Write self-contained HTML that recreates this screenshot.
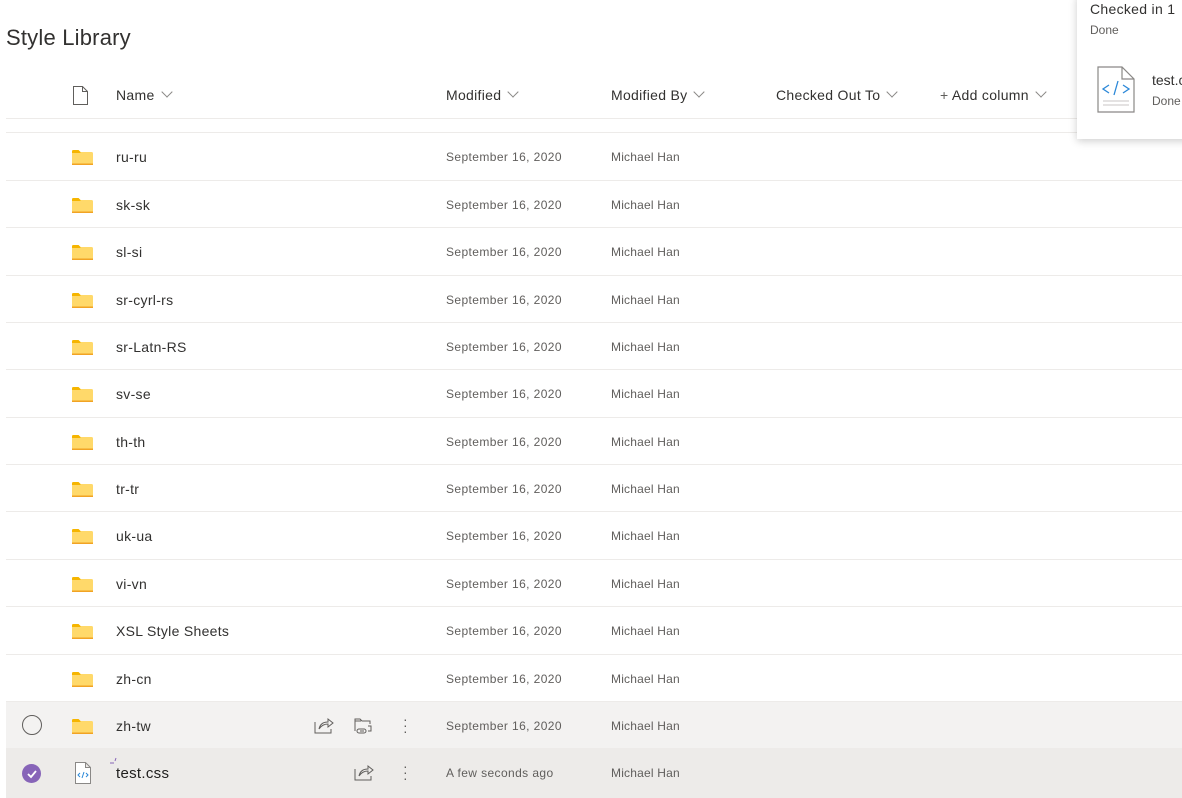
<!DOCTYPE html><html><head><style>
body{margin:0;width:1182px;height:797px;overflow:hidden;background:#fff;font-family:"Liberation Sans",sans-serif;color:#323130;position:relative}
.a{position:absolute}
.h{font-size:14px;top:87px;color:#323130;letter-spacing:.3px}
.chev{display:inline-block;width:7px;height:7px;border-right:1px solid #8a8886;border-bottom:1px solid #8a8886;transform:rotate(45deg);margin-left:8px;position:relative;top:-4px}
.row{position:absolute;left:6px;width:1176px;height:47px;border-top:1px solid #edebe9}
.nm{position:absolute;left:110px;top:16px;font-size:14px;letter-spacing:.3px}
.dt{position:absolute;left:440px;top:17px;font-size:12px;color:#605e5c;letter-spacing:.4px}
.by{position:absolute;left:605px;top:17px;font-size:12px;color:#605e5c;letter-spacing:.2px}
.fd{position:absolute;left:66px;top:17px;width:21px;height:15px}
</style></head><body>
<div class="a" style="left:6px;top:25px;font-size:22px;color:#323130;letter-spacing:.2px">Style Library</div>
<svg class="a" style="left:72px;top:86px" width="17" height="19"><path d="M1.5 .5h9l5 5v13h-14z M10.5 .5v5h5" fill="none" stroke="#605e5c"/></svg>
<div class="a h" style="left:116px">Name<span class="chev"></span></div>
<div class="a h" style="left:446px">Modified<span class="chev"></span></div>
<div class="a h" style="left:611px">Modified By<span class="chev"></span></div>
<div class="a h" style="left:776px">Checked Out To<span class="chev"></span></div>
<div class="a h" style="left:940px"><span style="color:#605e5c">+</span> Add column<span class="chev"></span></div>
<div class="a" style="left:6px;top:118px;width:1176px;border-top:1px solid #edebe9"></div>
<div id="rows"></div>
<script>
var n=["ru-ru","sk-sk","sl-si","sr-cyrl-rs","sr-Latn-RS","sv-se","th-th","tr-tr","uk-ua","vi-vn","XSL Style Sheets","zh-cn","zh-tw"];
var tops=[132,180,227,275,322,369,417,464,511,559,606,654,701];
var fold='<svg class="fd" viewBox="0 0 21 15"><path d="M0 1.5a1.5 1.5 0 0 1 1.5-1.5h5l2 2h11a1.5 1.5 0 0 1 1.5 1.5v10a1.5 1.5 0 0 1-1.5 1.5h-18a1.5 1.5 0 0 1-1.5-1.5z" fill="#ffd96a"/><path d="M0 1.5a1.5 1.5 0 0 1 1.5-1.5h5l2 2v1h-8.5z" fill="#f6b500"/><rect x="0" y="13.5" width="21" height="1.5" fill="#f1a324"/></svg>';
var h='';
for(var i=0;i<13;i++){
var bg=i==12?'background:#f3f2f1;':'';
h+='<div class="row" style="top:'+tops[i]+'px;'+bg+'">'+fold+'<div class="nm">'+n[i]+'</div><div class="dt">September 16, 2020</div><div class="by">Michael Han</div>';
if(i==12){h+='<div class="a" style="left:16px;top:13px;width:18px;height:18px;border:1px solid #605e5c;border-radius:50%"></div>'+
'<svg class="a" style="left:308px;top:14px" width="20" height="18"><path d="M1 6v11h16v-4 M5 13c1-5 4-7 9-7v-3l5 4-5 4v-3c-4 0-7 2-9 5z" fill="none" stroke="#605e5c"/></svg>'+
'<svg class="a" style="left:348px;top:14px" width="20" height="20"><path d="M1 15V3h5l2 2h8v3 M1 5h6 M14 10h3v5h-3 M10 17H5a2 2 0 0 1 0-4h5a2 2 0 0 1 0 4 M6 15h4" fill="none" stroke="#605e5c"/></svg>'+
'<div class="a" style="left:397px;top:14px;width:3px;color:#605e5c;font-size:14px;line-height:6px">·<br>·<br>·</div>';}
h+='</div>';}
h+='<div class="row" style="top:748px;height:49px;background:#edebe9">'+
'<div class="a" style="left:16px;top:15px;width:19px;height:19px;background:#8764b8;border-radius:50%"></div><svg class="a" style="left:20px;top:20px" width="12" height="10"><path d="M2 5l3 3 5-6" fill="none" stroke="#fff" stroke-width="1.8"/></svg>'+
'<svg class="a" style="left:68px;top:13px" width="18" height="22"><path d="M1.5 .5h10l5 5v16h-15z M11.5 .5v5h5" fill="#fff" stroke="#8a8886"/><path d="M6 11l-2 2 2 2 M12 11l2 2-2 2 M10 10l-2 6" fill="none" stroke="#2b88d8"/></svg>'+
'<svg class="a" style="left:103px;top:8px" width="10" height="8"><path d="M1 6h4 M6 4l1-3" stroke="#8764b8"/></svg>'+
'<div class="nm" style="top:16px;color:#201f1e;font-size:15px">test.css</div>'+
'<svg class="a" style="left:348px;top:14px" width="20" height="18"><path d="M1 6v11h16v-4 M5 13c1-5 4-7 9-7v-3l5 4-5 4v-3c-4 0-7 2-9 5z" fill="none" stroke="#605e5c"/></svg>'+
'<div class="a" style="left:397px;top:14px;width:3px;color:#605e5c;font-size:14px;line-height:6px">·<br>·<br>·</div>'+
'<div class="dt">A few seconds ago</div><div class="by">Michael Han</div></div>';
document.getElementById('rows').innerHTML=h;
</script>
<div class="a" style="left:1077px;top:-5px;width:120px;height:144px;background:#fff;box-shadow:0 2px 8px rgba(0,0,0,.2)">
<div class="a" style="left:13px;top:6px;font-size:14px;white-space:nowrap;letter-spacing:.3px">Checked in 1</div>
<div class="a" style="left:13px;top:28px;font-size:12px;color:#605e5c">Done</div>
<svg class="a" style="left:20px;top:71px" width="40" height="48"><path d="M1 1h24l12 12v33H1z M25 1v12h12" fill="#fff" stroke="#8a8886" stroke-width="1.2"/><path d="M12 19l-6 4 6 4 M26 19l6 4-6 4 M21 15l-4 14" fill="none" stroke="#2b88d8" stroke-width="1.3"/><path d="M6 35h26M6 39h26" stroke="#c8c6c4"/></svg>
<div class="a" style="left:75px;top:77px;font-size:14px">test.c</div>
<div class="a" style="left:75px;top:99px;font-size:12px;color:#605e5c">Done</div>
</div>
</body></html>
